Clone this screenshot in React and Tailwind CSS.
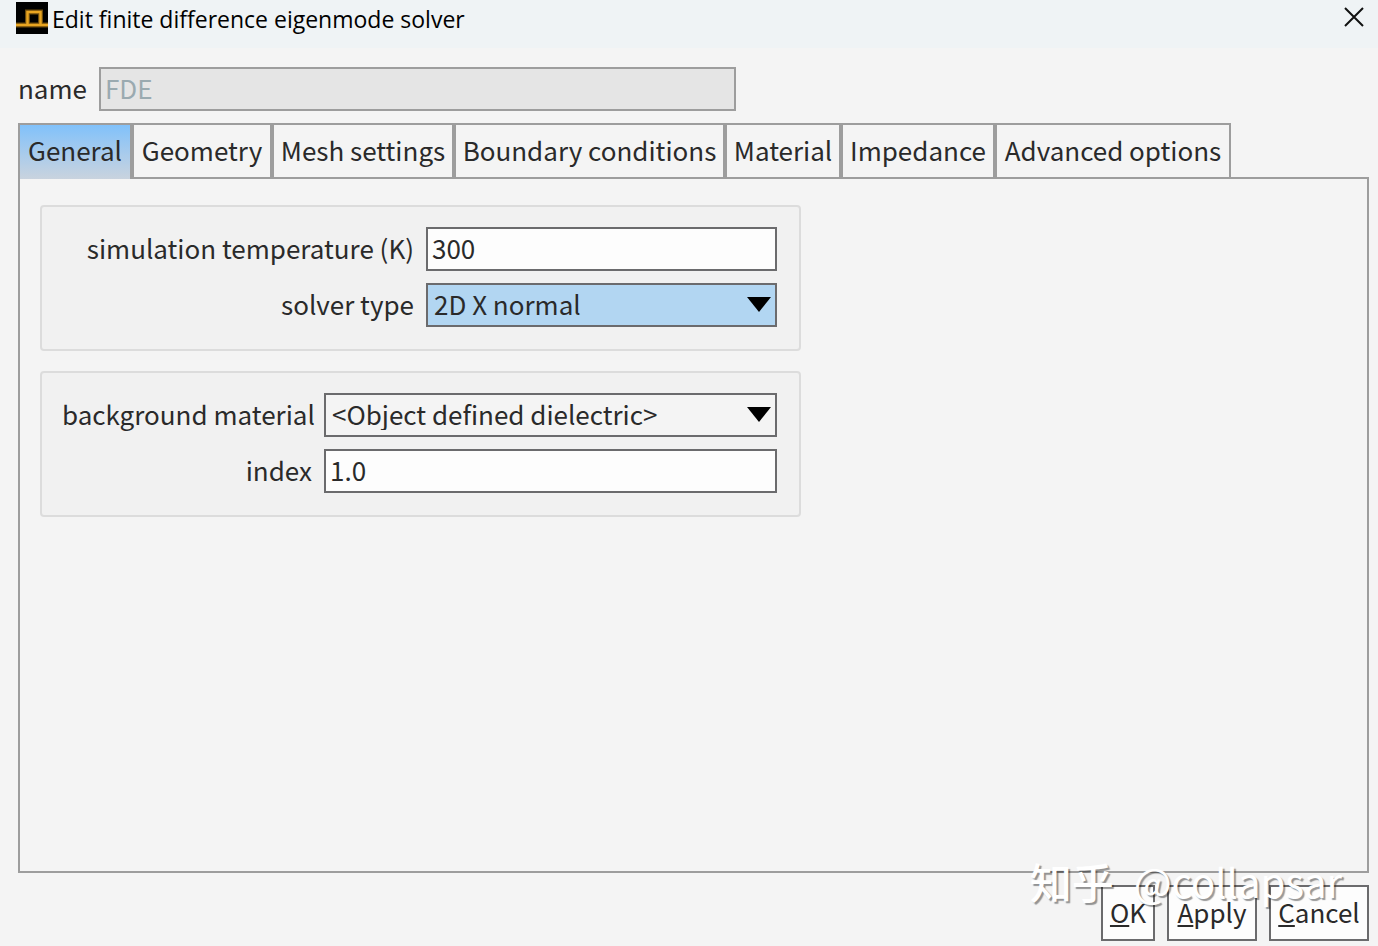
import { useState } from "react";

const tabs = [
  { name: "General", width: "w-[114px]" },
  { name: "Geometry", width: "w-[140px]" },
  { name: "Mesh settings", width: "w-[182px]" },
  { name: "Boundary conditions", width: "w-[271px]" },
  { name: "Material", width: "w-[116px]" },
  { name: "Impedance", width: "w-[154px]" },
  { name: "Advanced options", width: "w-[236px]" },
];

const AppIcon = () => (
  <svg className="w-8 h-8 shrink-0" viewBox="0 0 32 32" fill="none">
    <rect width="32" height="32" fill="#000" />
    <path d="M0 23H32M11.5 23V10H24.5V23" stroke="#6b4a0c" strokeWidth="5" />
    <path d="M0 23H32M11.5 23V10H24.5V23" stroke="#e9a521" strokeWidth="2.5" />
  </svg>
);

const TextField = ({ id, defaultValue }) => (
  <input
    id={id}
    type="text"
    defaultValue={defaultValue}
    className="w-full min-w-0 h-11 px-1 pb-1 border-2 border-[#6b6b6d] bg-[#fdfdfd] outline-none"
  />
);

const SelectField = ({ id, options, active }) => (
  <div className="relative">
    <select
      id={id}
      className={`appearance-none w-full h-11 pl-1.5 pr-10 pb-0.5 border-2 border-[#6b6b6d] outline-none ${
        active ? "bg-[#b2d6f2]" : "bg-[#f4f4f4]"
      }`}
    >
      {options.map((option) => (
        <option key={option}>{option}</option>
      ))}
    </select>
    <svg
      className="absolute right-1.5 top-3.5 w-6 h-4 pointer-events-none"
      viewBox="0 0 24 16"
    >
      <path d="M0 0H24L12 15Z" fill="#000" />
    </svg>
  </div>
);

const Group = ({ columns, children }) => (
  <div
    className={`grid ${columns} items-center gap-3 max-w-[761px] pl-5 pr-[22px] pt-5 pb-[22px] border-2 border-[#dcdcdc] rounded bg-[#f1f1f1]`}
  >
    {children}
  </div>
);

const Label = ({ htmlFor, children }) => (
  <label htmlFor={htmlFor} className="pb-0.5 text-right whitespace-nowrap">
    {children}
  </label>
);

const DialogButton = ({ hotkey, rest, width }) => (
  <button
    className={`${width} h-14 pb-0.5 border-2 border-[#6b6b6d] bg-[#fdfdfd] whitespace-nowrap`}
  >
    <span className="underline underline-offset-2 decoration-2">{hotkey}</span>
    {rest}
  </button>
);

const App = () => {
  const [activeTab, setActiveTab] = useState("General");

  return (
    <div className="flex flex-col min-h-screen bg-[#f4f4f4] text-[#2a2a2a] text-[26px] leading-8 font-['Noto_Sans_CJK_SC','Noto_Sans',sans-serif]">
      {/* Title bar */}
      <header className="flex items-start justify-between h-12 pt-0.5 pl-4 pr-3.5 bg-[#eff3f5]">
        <div className="flex items-start gap-1">
          <AppIcon />
          <h1 className="pt-px text-[23px] leading-8 text-black font-['Open_Sans','Noto_Sans',sans-serif]">
            Edit finite difference eigenmode solver
          </h1>
        </div>
        <button aria-label="Close" className="pt-[5px]">
          <svg className="w-5 h-5" viewBox="0 0 20 20" fill="none">
            <path d="M1 1L19 19M19 1L1 19" stroke="#111" strokeWidth="2" />
          </svg>
        </button>
      </header>

      <main className="flex flex-col flex-1 pl-[18px] pr-[9px] pt-[19px] pb-3">
        <div className="flex items-center gap-3">
          <Label htmlFor="name">name</Label>
          <input
            id="name"
            type="text"
            defaultValue="FDE"
            disabled
            className="w-full max-w-[637px] h-11 px-1 pb-1 border-2 border-[#9d9d9d] bg-[#e5e5e5] text-[#9aaab0]"
          />
        </div>

        {/* Tabs */}
        <div role="tablist" className="flex mt-3 z-10">
          {tabs.map(({ name, width }) => (
            <button
              key={name}
              role="tab"
              aria-selected={name === activeTab}
              onClick={() => setActiveTab(name)}
              className={`${width} h-14 border-2 border-[#9d9d9d] whitespace-nowrap ${
                name === activeTab
                  ? "pb-1 border-b-0 bg-linear-to-b from-[#80c1fa] to-[#c9d3de]"
                  : "pb-0.5 bg-[#f4f4f4]"
              }`}
            >
              {name}
            </button>
          ))}
        </div>

        <section
          role="tabpanel"
          className="flex flex-col flex-1 gap-5 -mt-0.5 px-5 pt-[26px] pb-5 border-2 border-[#9d9d9d]"
        >
          {activeTab === "General" && (
            <>
              <Group columns="grid-cols-[1fr_351px]">
                <Label htmlFor="temperature">simulation temperature (K)</Label>
                <TextField id="temperature" defaultValue="300" />
                <Label htmlFor="solver">solver type</Label>
                <SelectField
                  id="solver"
                  active
                  options={["2D X normal", "2D Y normal", "2D Z normal"]}
                />
              </Group>

              <Group columns="grid-cols-[250px_1fr]">
                <Label htmlFor="material">background material</Label>
                <SelectField
                  id="material"
                  options={["<Object defined dielectric>"]}
                />
                <Label htmlFor="index">index</Label>
                <TextField id="index" defaultValue="1.0" />
              </Group>
            </>
          )}
        </section>
      </main>

      <footer className="relative flex justify-end gap-3 pr-[9px] pb-[5px]">
        <DialogButton hotkey="O" rest="K" width="w-[54px]" />
        <DialogButton hotkey="A" rest="pply" width="w-[90px]" />
        <DialogButton hotkey="C" rest="ancel" width="w-[100px]" />
        {/* Watermark */}
        <div className="absolute right-9 -top-8 z-20 flex items-center gap-5 leading-[56px] text-white whitespace-nowrap pointer-events-none [text-shadow:2px_2px_1px_#00000066]">
          <span className="text-[42px] font-medium">知乎</span>
          <span className="text-[40px]">@collapsar</span>
        </div>
      </footer>
    </div>
  );
};

export default App;
